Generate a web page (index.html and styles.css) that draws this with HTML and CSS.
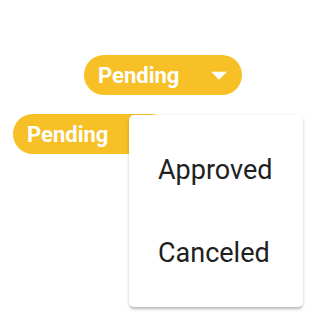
FILE: index.html
```html
<!DOCTYPE html>
<html>
<head>
<meta charset="utf-8">
<link rel="stylesheet" href="styles.css">
</head>
<body>
<div class="page">
  <div class="row row-top">
    <div class="pill">
      <span class="pill-label">Pending</span>
      <svg class="caret" viewBox="0 0 24 24" width="38" height="38"><path d="M7 10l5 5 5-5z" fill="#fff"/></svg>
    </div>
  </div>
  <div class="row row-second">
    <div class="pill">
      <span class="pill-label">Pending</span>
      <svg class="caret" viewBox="0 0 24 24" width="38" height="38"><path d="M7 10l5 5 5-5z" fill="#fff"/></svg>
    </div>
    <div class="menu">
      <div class="menu-item">Approved</div>
      <div class="menu-item">Canceled</div>
    </div>
  </div>
</div>
</body>
</html>
```
FILE: styles.css
```css
html, body {
  margin: 0;
  padding: 0;
  background: #fff;
  font-family: Roboto, "Noto Sans", sans-serif;
}
.page {
  width: 320px;
  height: 325px;
  overflow: hidden;
  padding-top: 55px;
  box-sizing: border-box;
}
.row {
  display: flex;
}
.row-top {
  padding-left: 84px;
}
.row-second {
  position: relative;
  margin-top: 19px;
  padding-left: 13px;
}
.pill {
  display: flex;
  align-items: center;
  justify-content: space-between;
  width: 158px;
  height: 40px;
  box-sizing: border-box;
  padding: 0 4px 0 14px;
  border-radius: 20px;
  background: #f6c026;
  color: #fff;
}
.pill-label {
  font-size: 22px;
  font-weight: 700;
}
.caret {
  display: block;
}
.menu {
  position: absolute;
  z-index: 2;
  left: 129px;
  top: 1px;
  width: 174px;
  padding: 13px 0;
  background: #fff;
  border-radius: 5px;
  box-shadow: 0 3px 3px -1px rgba(0,0,0,0.22), 0 1px 4px rgba(0,0,0,0.12);
}
.menu-item {
  height: 83px;
  display: flex;
  align-items: center;
  padding-left: 29px;
  font-size: 27px;
  color: #212121;
}
```
